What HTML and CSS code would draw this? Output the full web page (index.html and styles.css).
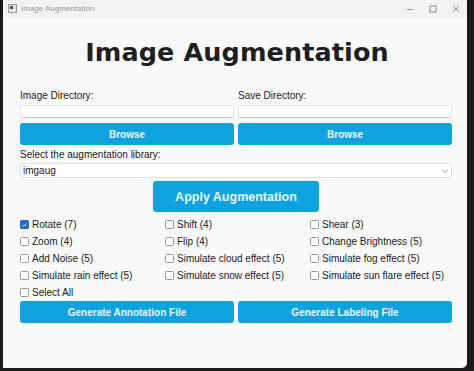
FILE: index.html
```html
<!DOCTYPE html>
<html>
<head>
<meta charset="utf-8">
<link rel="stylesheet" href="styles.css">
</head>
<body>
<div class="screen">
  <div class="window">
    <div class="titlebar">
      <span class="app-icon"><span class="app-icon-inner"></span></span>
      <span class="title">Image Augmentation</span>
      <span class="controls">
        <svg class="ctl" width="10" height="10" viewBox="0 0 10 10"><path d="M2 5.5H8" stroke="#777" stroke-width="0.8"/></svg>
        <svg class="ctl" width="10" height="10" viewBox="0 0 10 10"><rect x="2" y="2" width="6" height="6" fill="none" stroke="#777" stroke-width="0.8"/></svg>
        <svg class="ctl" width="10" height="10" viewBox="0 0 10 10"><path d="M2 2L8 8M8 2L2 8" stroke="#777" stroke-width="0.8"/></svg>
      </span>
    </div>
    <div class="content">
      <h1 class="heading">Image Augmentation</h1>
      <div class="two-col dirs">
        <div class="field">
          <div class="label">Image Directory:</div>
          <div class="entry"></div>
          <div class="btn btn-browse">Browse</div>
        </div>
        <div class="field">
          <div class="label">Save Directory:</div>
          <div class="entry"></div>
          <div class="btn btn-browse">Browse</div>
        </div>
      </div>
      <div class="label lib-label">Select the augmentation library:</div>
      <div class="combo">
        <span class="combo-text">imgaug</span>
        <svg class="chev" width="8" height="6" viewBox="0 0 8 6"><path d="M1 1.5L4 4.5L7 1.5" fill="none" stroke="#888" stroke-width="0.9"/></svg>
      </div>
      <div class="apply-row"><div class="btn btn-apply">Apply Augmentation</div></div>
      <div class="checks">
        <label class="chk"><span class="box checked"><svg width="8" height="8" viewBox="0 0 8 8"><path d="M1.8 4.2L3.3 5.6L6.2 2.4" fill="none" stroke="#fff" stroke-width="1.1"/></svg></span>Rotate (7)</label>
        <label class="chk"><span class="box"></span>Shift (4)</label>
        <label class="chk"><span class="box"></span>Shear (3)</label>
        <label class="chk"><span class="box"></span>Zoom (4)</label>
        <label class="chk"><span class="box"></span>Flip (4)</label>
        <label class="chk"><span class="box"></span>Change Brightness (5)</label>
        <label class="chk"><span class="box"></span>Add Noise (5)</label>
        <label class="chk"><span class="box"></span>Simulate cloud effect (5)</label>
        <label class="chk"><span class="box"></span>Simulate fog effect (5)</label>
        <label class="chk"><span class="box"></span>Simulate rain effect (5)</label>
        <label class="chk"><span class="box"></span>Simulate snow effect (5)</label>
        <label class="chk"><span class="box"></span>Simulate sun flare effect (5)</label>
        <label class="chk"><span class="box"></span>Select All</label>
      </div>
      <div class="two-col gens">
        <div class="btn btn-gen">Generate Annotation File</div>
        <div class="btn btn-gen">Generate Labeling File</div>
      </div>
    </div>
  </div>
</div>
</body>
</html>
```
FILE: styles.css
```css
html, body {
  margin: 0;
  padding: 0;
  background: #1b1b1b;
}
.screen {
  width: 474px;
  height: 371px;
  background: #1b1b1b;
  display: flex;
  align-items: flex-start;
  overflow: hidden;
}
.window {
  margin-left: 3px;
  width: 464px;
  height: 368px;
  background: #f9f9f9;
  border-bottom-right-radius: 5px;
  display: flex;
  flex-direction: column;
  font-family: "Liberation Sans", Arial, sans-serif;
  color: #222;
}
.titlebar {
  height: 17px;
  background: #f2f2f2;
  display: flex;
  align-items: center;
  padding-left: 5px;
}
.app-icon {
  width: 7px;
  height: 7px;
  border: 1px solid #9a9a9a;
  background: #e4e4e4;
  display: flex;
}
.app-icon-inner {
  width: 3px;
  height: 3px;
  background: #555;
  margin: 1px;
}
.title {
  font-size: 8px;
  color: #9a9a9a;
  margin-left: 4px;
}
.controls {
  margin-left: auto;
  display: flex;
  gap: 13px;
  margin-right: 6px;
}
.content {
  padding: 0 13px 0 17px;
  display: flex;
  flex-direction: column;
}
.heading {
  margin: 20px 0 0 0;
  font-family: "DejaVu Sans", Verdana, sans-serif;
  font-weight: bold;
  font-size: 25.5px;
  line-height: 30px;
  text-align: center;
  color: #1f1f1f;
  letter-spacing: 0.1px;
}
.two-col {
  display: grid;
  grid-template-columns: 214px 214px;
  column-gap: 4px;
}
.dirs {
  margin-top: 23px;
}
.field {
  display: flex;
  flex-direction: column;
}
.label {
  font-size: 10px;
  line-height: 12px;
  color: #222;
}
.entry {
  margin-top: 3px;
  height: 11px;
  background: #fff;
  border: 1px solid #e2e2e2;
  border-bottom-color: #c8c8c8;
  border-radius: 2px;
}
.btn {
  background: #0fa2e0;
  color: #eaf7fd;
  font-weight: bold;
  border-radius: 3px;
  display: flex;
  align-items: center;
  justify-content: center;
}
.btn-browse {
  margin-top: 5px;
  height: 22px;
  font-size: 10px;
}
.lib-label {
  margin-top: 4px;
}
.combo {
  margin-top: 2px;
  height: 13px;
  background: #fff;
  border: 1px solid #e0e0e0;
  border-radius: 2px;
  display: flex;
  align-items: center;
  width: 430px;
}
.combo-text {
  font-size: 10px;
  margin-left: 2px;
}
.chev {
  margin-left: auto;
  margin-right: 2px;
}
.apply-row {
  display: flex;
  justify-content: center;
  margin-top: 3px;
  width: 432px;
}
.btn-apply {
  width: 166px;
  height: 31px;
  font-size: 12.5px;
}
.checks {
  margin-top: 4px;
  display: grid;
  grid-template-columns: 145px 145px 145px;
  grid-auto-rows: 17px;
}
.chk {
  display: flex;
  align-items: center;
  font-size: 10px;
  color: #222;
  white-space: nowrap;
}
.box {
  width: 7px;
  height: 7px;
  border: 1px solid #999;
  border-radius: 1.5px;
  background: #fff;
  margin-right: 3px;
  display: flex;
  align-items: center;
  justify-content: center;
}
.box.checked {
  background: #2566c8;
  border-color: #2566c8;
}
.box svg {
  display: block;
}
.gens {
  margin-top: 0;
}
.btn-gen {
  height: 22px;
  font-size: 10px;
}
```
